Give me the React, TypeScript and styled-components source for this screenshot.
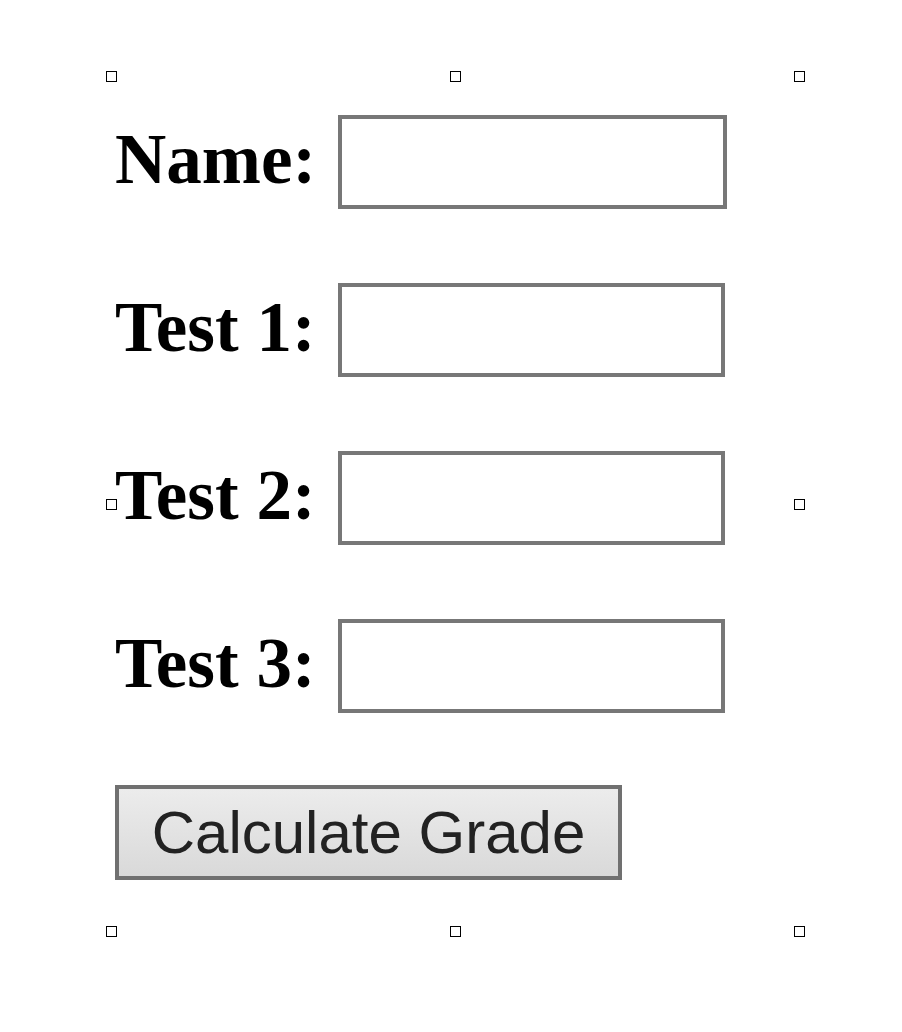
import React from "react";
import styled, { createGlobalStyle } from "styled-components";

const Global = createGlobalStyle`
  html, body { margin: 0; padding: 0; background: #ffffff; }
  body {
    font-family: "Liberation Serif", "Times New Roman", serif;
    min-height: 100vh;
    padding-bottom: 20px;
    box-sizing: border-box;
  }
`;

const Frame = styled.div`
  position: relative;
  margin: 76px 0 0 111px;
  width: 688px;
  height: 855px;
  box-sizing: border-box;
  padding: 39px 0 0 5px;
`;

const Handle = styled.span<{ $x: string; $y: string }>`
  position: absolute;
  left: ${(p) => p.$x};
  top: ${(p) => p.$y};
  width: 9px;
  height: 9px;
  margin: -5px 0 0 -5px;
  border: 1px solid #000;
  background: #fff;
`;

const Form = styled.form`
  display: grid;
  grid-template-columns: 222px auto;
  row-gap: 74px;
  align-items: center;
  justify-items: start;
`;

const Label = styled.label`
  font-family: "Liberation Serif", "Times New Roman", serif;
  font-weight: bold;
  font-size: 71px;
  line-height: 1;
  color: #000;
  margin-top: -6px;
  margin-left: -1px;
`;

const Input = styled.input<{ $w: number }>`
  width: ${(p) => p.$w}px;
  height: 94px;
  box-sizing: border-box;
  border: 4px solid #777777;
  background: #fff;
  margin: 0;
  padding: 0 8px;
  font-size: 40px;
  outline: none;
`;

const Button = styled.button`
  grid-column: 1 / span 2;
  width: 507px;
  height: 95px;
  margin: -2px 0 0 -1px;
  box-sizing: border-box;
  border: 4px solid #707070;
  background: linear-gradient(#ececec, #d9d9d9);
  font-family: "Liberation Sans", Arial, sans-serif;
  font-size: 60px;
  color: #222222;
  padding: 0;
  cursor: pointer;
`;

const rows = [
  { label: "Name:", w: 389 },
  { label: "Test 1:", w: 387 },
  { label: "Test 2:", w: 387 },
  { label: "Test 3:", w: 387 },
];

const handles: [string, string][] = [
  ["0", "0"],
  ["50%", "0"],
  ["100%", "0"],
  ["0", "50%"],
  ["100%", "50%"],
  ["0", "100%"],
  ["50%", "100%"],
  ["100%", "100%"],
];

export default function App() {
  return (
    <>
      <Global />
      <Frame>
        {handles.map(([x, y], i) => (
          <Handle key={i} $x={x} $y={y} />
        ))}
        <Form onSubmit={(e) => e.preventDefault()}>
          {rows.map((r) => (
            <React.Fragment key={r.label}>
              <Label>{r.label}</Label>
              <Input $w={r.w} type="text" />
            </React.Fragment>
          ))}
          <Button type="submit">Calculate Grade</Button>
        </Form>
      </Frame>
    </>
  );
}
